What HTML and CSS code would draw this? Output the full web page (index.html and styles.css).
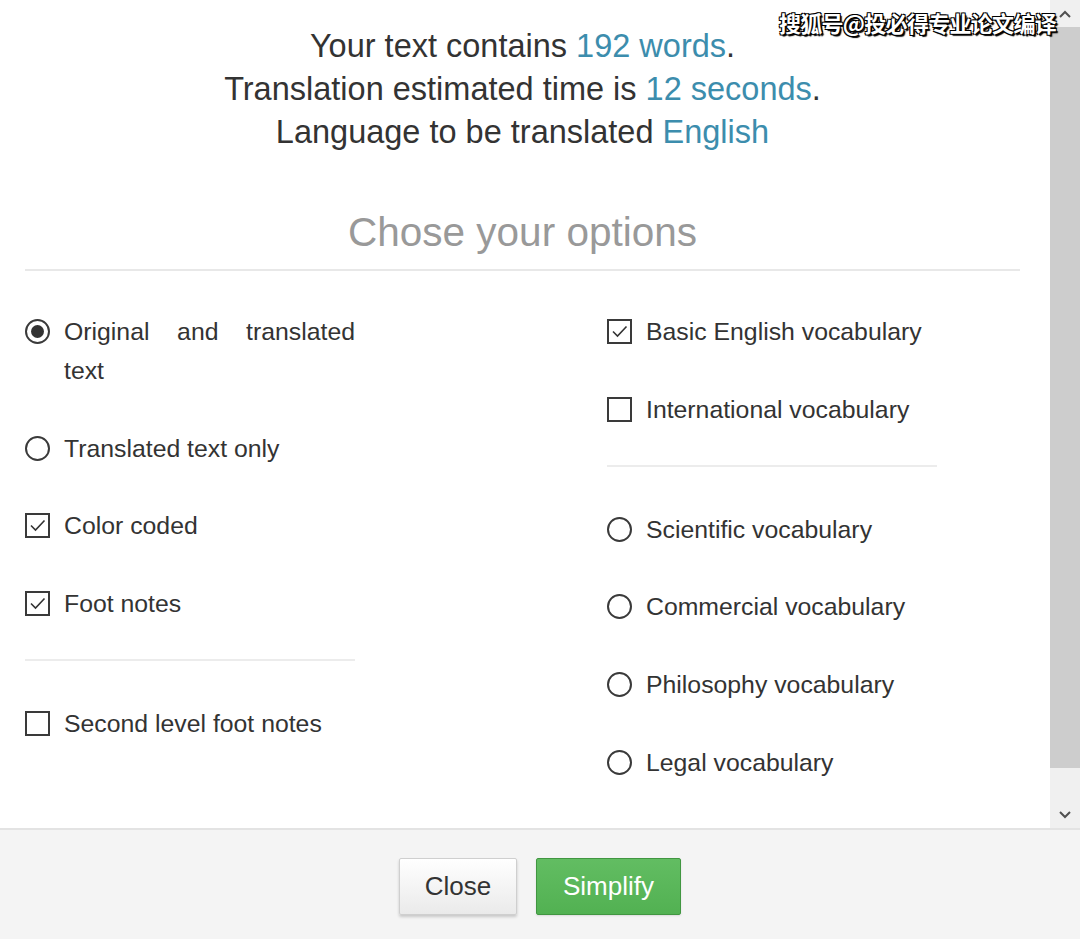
FILE: index.html
```html
<!DOCTYPE html>
<html>
<head>
<meta charset="utf-8">
<link rel="stylesheet" href="styles.css">
</head>
<body>
<div class="top">
  <div class="content">
    <div class="summary">
      <p>Your text contains <span class="hl">192 words</span>.</p>
      <p>Translation estimated time is <span class="hl">12 seconds</span>.</p>
      <p>Language to be translated <span class="hl">English</span></p>
    </div>
    <h2 class="title">Chose your options</h2>
    <div class="options">
      <div class="col">
        <label class="opt">
          <span class="radio on"></span>
          <span class="lbl just">Original and translated text</span>
        </label>
        <label class="opt">
          <span class="radio"></span>
          <span class="lbl">Translated text only</span>
        </label>
        <label class="opt">
          <span class="box on"><svg viewBox="0 0 25 25" width="25" height="25"><path d="M6 12.5 L10.5 17 L19.5 7.5" fill="none" stroke="#333" stroke-width="1.6"/></svg></span>
          <span class="lbl">Color coded</span>
        </label>
        <label class="opt">
          <span class="box on"><svg viewBox="0 0 25 25" width="25" height="25"><path d="M6 12.5 L10.5 17 L19.5 7.5" fill="none" stroke="#333" stroke-width="1.6"/></svg></span>
          <span class="lbl">Foot notes</span>
        </label>
        <hr class="sep">
        <label class="opt">
          <span class="box"></span>
          <span class="lbl">Second level foot notes</span>
        </label>
      </div>
      <div class="col">
        <label class="opt">
          <span class="box on"><svg viewBox="0 0 25 25" width="25" height="25"><path d="M6 12.5 L10.5 17 L19.5 7.5" fill="none" stroke="#333" stroke-width="1.6"/></svg></span>
          <span class="lbl">Basic English vocabulary</span>
        </label>
        <label class="opt">
          <span class="box"></span>
          <span class="lbl">International vocabulary</span>
        </label>
        <hr class="sep">
        <label class="opt">
          <span class="radio"></span>
          <span class="lbl">Scientific vocabulary</span>
        </label>
        <label class="opt">
          <span class="radio"></span>
          <span class="lbl">Commercial vocabulary</span>
        </label>
        <label class="opt">
          <span class="radio"></span>
          <span class="lbl">Philosophy vocabulary</span>
        </label>
        <label class="opt">
          <span class="radio"></span>
          <span class="lbl">Legal vocabulary</span>
        </label>
      </div>
    </div>
  </div>
  <div class="scrollbar">
    <div class="arrow up"><svg viewBox="0 0 12 8" width="12" height="8"><path d="M1 7 L6 2 L11 7" fill="none" stroke="#505050" stroke-width="2"/></svg></div>
    <div class="thumb"></div>
    <div class="track"></div>
    <div class="arrow down"><svg viewBox="0 0 12 8" width="12" height="8"><path d="M1 1 L6 6 L11 1" fill="none" stroke="#505050" stroke-width="2"/></svg></div>
  </div>
</div>
<div class="footer">
  <button class="btn close">Close</button>
  <button class="btn simplify">Simplify</button>
</div>
<div class="watermark">搜狐号@投必得专业论文编译</div>
</body>
</html>
```
FILE: styles.css
```css
* { box-sizing: border-box; }
html, body { margin: 0; padding: 0; }
body {
  width: 1080px;
  height: 939px;
  overflow: hidden;
  background: #fff;
  font-family: "Liberation Sans", Arial, sans-serif;
  color: #333;
  position: relative;
}
.top {
  display: flex;
  height: 828px;
}
.content {
  width: 1050px;
  padding: 0 30px 0 25px;
}
.summary {
  text-align: center;
  font-size: 32.5px;
  line-height: 43px;
  padding-top: 25px;
}
.summary p { margin: 0; }
.hl { color: #3c8dad; }
.title {
  margin: 56px 0 0;
  font-weight: normal;
  text-align: center;
  color: #999;
  font-size: 40.5px;
  line-height: 44px;
  padding-bottom: 15px;
  border-bottom: 2px solid #e8e8e8;
}
.options {
  display: grid;
  grid-template-columns: 330px 330px;
  column-gap: 252px;
  padding-top: 41px;
}
.col {
  display: flex;
  flex-direction: column;
  gap: 38.6px;
}
.opt {
  display: flex;
  align-items: flex-start;
  gap: 14px;
  font-size: 24.8px;
  line-height: 39px;
}
.lbl { flex: 1; }
.lbl.just { text-align: justify; }
.radio, .box {
  flex: 0 0 25px;
  width: 25px;
  height: 25px;
  margin-top: 7px;
  border: 2px solid #3a3a3a;
  position: relative;
}
.radio { border-radius: 50%; }
.radio.on::after {
  content: "";
  position: absolute;
  left: 4px;
  top: 4px;
  width: 13px;
  height: 13px;
  border-radius: 50%;
  background: #333;
}
.box svg { position: absolute; left: -2px; top: -2px; }
.sep {
  margin: -2.5px 0 4.5px;
  border: 0;
  border-top: 2px solid #ececec;
  height: 0;
}
.scrollbar {
  width: 30px;
  display: flex;
  flex-direction: column;
  background: #f0f0f0;
}
.arrow {
  height: 27px;
  display: flex;
  align-items: center;
  justify-content: center;
}
.thumb {
  height: 741px;
  background: #cdcdcd;
}
.track { flex: 1; }
.footer {
  height: 111px;
  border-top: 2px solid #e3e3e3;
  background: #f4f4f4;
  display: flex;
  justify-content: center;
  align-items: flex-start;
  gap: 19px;
  padding-top: 28px;
}
.btn {
  font-family: "Liberation Sans", Arial, sans-serif;
  font-size: 26px;
  height: 57px;
  border-radius: 2px;
  cursor: pointer;
}
.close {
  width: 118px;
  color: #333;
  background: linear-gradient(#ffffff, #eaeaea);
  border: 1px solid #cfcfcf;
  box-shadow: 0 2px 3px rgba(0,0,0,0.18);
}
.simplify {
  width: 145px;
  color: #fff;
  background: linear-gradient(#62bd62, #52b152);
  border: 1px solid #419641;
  box-shadow: 0 1px 2px rgba(0,0,0,0.1);
}
.watermark {
  position: absolute;
  right: 24px;
  top: 8px;
  font-family: "Noto Sans CJK SC", sans-serif;
  font-weight: bold;
  font-size: 22px;
  line-height: 28px;
  color: #fff;
  text-shadow: 1px 1px 0 #000, -1px -1px 0 #000, 1px -1px 0 #000, -1px 1px 0 #000, 2px 2px 1px #000;
  letter-spacing: -0.7px;
}
```
